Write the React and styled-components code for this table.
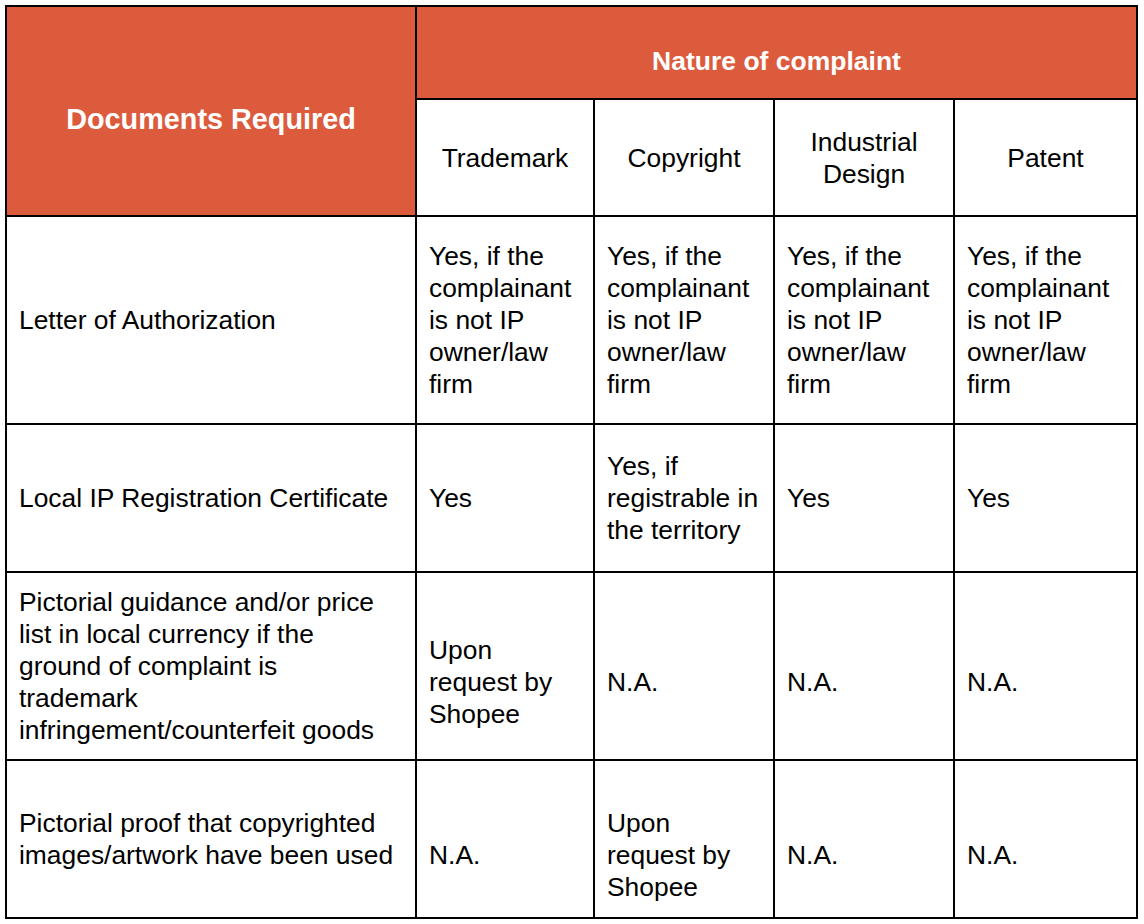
import React from 'react'
import styled, { createGlobalStyle } from 'styled-components'

const GlobalStyle = createGlobalStyle`
  html, body {
    margin: 0;
    padding: 0;
    background: #fff;
  }
  body {
    font-family: "Liberation Sans", Arial, sans-serif;
  }
`

const ORANGE = '#dd5b3d'

const columns = ['Trademark', 'Copyright', 'Industrial Design', 'Patent']

const rows = [
  {
    label: 'Letter of Authorization',
    height: 208,
    values: [
      'Yes, if the complainant is not IP owner/law firm',
      'Yes, if the complainant is not IP owner/law firm',
      'Yes, if the complainant is not IP owner/law firm',
      'Yes, if the complainant is not IP owner/law firm',
    ],
  },
  {
    label: 'Local IP Registration Certificate',
    height: 148,
    values: ['Yes', 'Yes, if registrable in the territory', 'Yes', 'Yes'],
  },
  {
    label:
      'Pictorial guidance and/or price list in local currency if the ground of complaint is trademark infringement/counterfeit goods',
    height: 188,
    shifted: true,
    values: ['Upon request by Shopee', 'N.A.', 'N.A.', 'N.A.'],
  },
  {
    label: 'Pictorial proof that copyrighted images/artwork have been used',
    height: 158,
    shifted: true,
    values: ['N.A.', 'Upon request by Shopee', 'N.A.', 'N.A.'],
  },
]

function App() {
  return (
    <>
      <GlobalStyle />
      <Page>
        <Table>
          <colgroup>
            <col style={{ width: 410 }} />
            <col style={{ width: 178 }} />
            <col style={{ width: 180 }} />
            <col style={{ width: 180 }} />
            <col style={{ width: 183 }} />
          </colgroup>
          <thead>
            <Row $h={93}>
              <HeadCell rowSpan={2} $size={28.8}>
                Documents Required
              </HeadCell>
              <HeadCell colSpan={4} $size={26.5}>
                Nature of complaint
              </HeadCell>
            </Row>
            <Row $h={117}>
              {columns.map((c) => (
                <SubHead key={c}>{c}</SubHead>
              ))}
            </Row>
          </thead>
          <tbody>
            {rows.map((r) => (
              <Row $h={r.height} key={r.label}>
                <LabelCell>{r.label}</LabelCell>
                {r.values.map((v, i) => (
                  <Cell key={i} $shifted={r.shifted}>
                    {v}
                  </Cell>
                ))}
              </Row>
            ))}
          </tbody>
        </Table>
      </Page>
    </>
  )
}

const Page = styled.div`
  padding: 5px;
`

const Table = styled.table`
  border-collapse: collapse;
  table-layout: fixed;
  width: 1131px;
  border: 2px solid #000;
  color: #000;
  font-size: 26.4px;
  line-height: 32px;
`

const Row = styled.tr`
  height: ${(p) => p.$h}px;
`

const HeadCell = styled.th`
  background: ${ORANGE};
  color: #fff;
  font-weight: 700;
  font-size: ${(p) => p.$size}px;
  text-align: center;
  vertical-align: middle;
  border: 2px solid #000;
  padding: 16px 12px 0;
`

const SubHead = styled.td`
  text-align: center;
  vertical-align: middle;
  border: 2px solid #000;
  padding: 0 12px;
`

const Cell = styled.td`
  text-align: left;
  vertical-align: middle;
  border: 2px solid #000;
  padding: ${(p) => (p.$shifted ? '32px' : '0')} 12px 0;
`

const LabelCell = styled(Cell)`
  padding: 0 18px 0 12px;
`

export default App
